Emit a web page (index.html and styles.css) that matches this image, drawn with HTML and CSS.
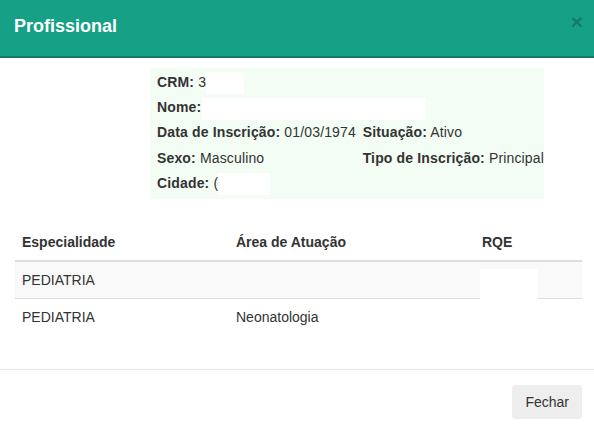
FILE: index.html
```html
<!DOCTYPE html>
<html lang="pt">
<head>
<meta charset="utf-8">
<title>Profissional</title>
<link rel="stylesheet" href="styles.css">
</head>
<body>
<div class="modal">
  <div class="modal-header">
    <h4 class="modal-title">Profissional</h4>
    <button class="close" type="button">&times;</button>
  </div>
  <div class="modal-body">
    <div class="info">
      <table class="info-table">
        <tr><td colspan="2"><b>CRM:</b> 3<span class="redact r-crm"></span></td></tr>
        <tr><td colspan="2"><b>Nome:</b> <span class="redact r-nome"></span></td></tr>
        <tr><td class="c1"><b>Data de Inscrição:</b> 01/03/1974</td><td><b>Situação:</b> Ativo</td></tr>
        <tr><td class="c1"><b>Sexo:</b> Masculino</td><td><b>Tipo de Inscrição:</b> Principal</td></tr>
        <tr><td colspan="2"><b>Cidade:</b> (<span class="redact r-cid"></span></td></tr>
      </table>
    </div>
    <table class="grid">
      <thead>
        <tr><th class="g1">Especialidade</th><th class="g2">Área de Atuação</th><th class="g3">RQE</th></tr>
      </thead>
      <tbody>
        <tr class="odd"><td>PEDIATRIA</td><td></td><td class="rqe"><span class="redact r-rqe"></span></td></tr>
        <tr><td>PEDIATRIA</td><td>Neonatologia</td><td></td></tr>
      </tbody>
    </table>
  </div>
  <div class="modal-footer">
    <button class="btn" type="button">Fechar</button>
  </div>
</div>
</body>
</html>
```
FILE: styles.css
```css
* { box-sizing: border-box; }
html, body { margin: 0; padding: 0; background: #fff; }
body {
  font-family: "Liberation Sans", Arial, sans-serif;
  font-size: 14px;
  line-height: 20px;
  color: #333;
  width: 594px;
  height: 431px;
  overflow: hidden;
}
.modal { width: 594px; }
.modal-header {
  background: #16a085;
  border-bottom: 2px solid #127a65;
  height: 58px;
  display: flex;
  align-items: center;
  justify-content: space-between;
  padding: 0 11px 4px 14px;
}
.modal-title {
  margin: 0;
  color: #fff;
  font-size: 18px;
  font-weight: bold;
  line-height: 20px;
}
.close {
  background: none;
  border: 0;
  padding: 0;
  font-family: "Liberation Sans", Arial, sans-serif;
  font-size: 21px;
  font-weight: bold;
  line-height: 1;
  color: #000;
  opacity: 0.22;
  margin-top: -10px;
}
.modal-body { padding: 10px 12px 14px 15px; }
.info {
  margin-left: 135px;
  width: 394px;
  background: #f4fdf4;
  padding: 2px 0 3px 7px;
  letter-spacing: 0.15px;
}
.info-table { border-collapse: collapse; }
.info-table td { padding: 0; height: 25.2px; line-height: 25px; white-space: nowrap; vertical-align: middle; }
.info-table td.c1 { width: 206px; }
.redact { display: inline-block; background: #fff; vertical-align: middle; }
.r-crm { width: 38px; height: 22px; }
.r-nome { width: 224px; height: 22px; margin-left: -3px; }
.r-cid { width: 52px; height: 22px; }
.grid {
  width: 567px;
  margin-top: 25px;
  margin-bottom: 20px;
  border-collapse: collapse;
}
.grid th, .grid td {
  text-align: left;
  padding: 8px 7px;
  line-height: 20px;
  vertical-align: top;
}
.grid th { font-weight: bold; border-bottom: 2px solid #ddd; }
.grid td { border-top: 1px solid #ddd; height: 37px; }
.grid .g1 { width: 214px; }
.grid .g2 { width: 246px; }
.grid tr.odd td { background: #f9f9f9; }
.grid td.rqe { position: relative; }
.r-rqe { position: absolute; left: 5px; top: 7px; width: 58px; height: 31px; }
.modal-footer {
  border-top: 1px solid #e5e5e5;
  padding: 15px 12px 15px 15px;
  display: flex;
  justify-content: flex-end;
}
.btn {
  font-family: "Liberation Sans", Arial, sans-serif;
  font-size: 14px;
  line-height: 20px;
  color: #333;
  background: #eee;
  border: 1px solid #eee;
  border-radius: 3px;
  padding: 6px 12px;
  height: 34px;
}
```
